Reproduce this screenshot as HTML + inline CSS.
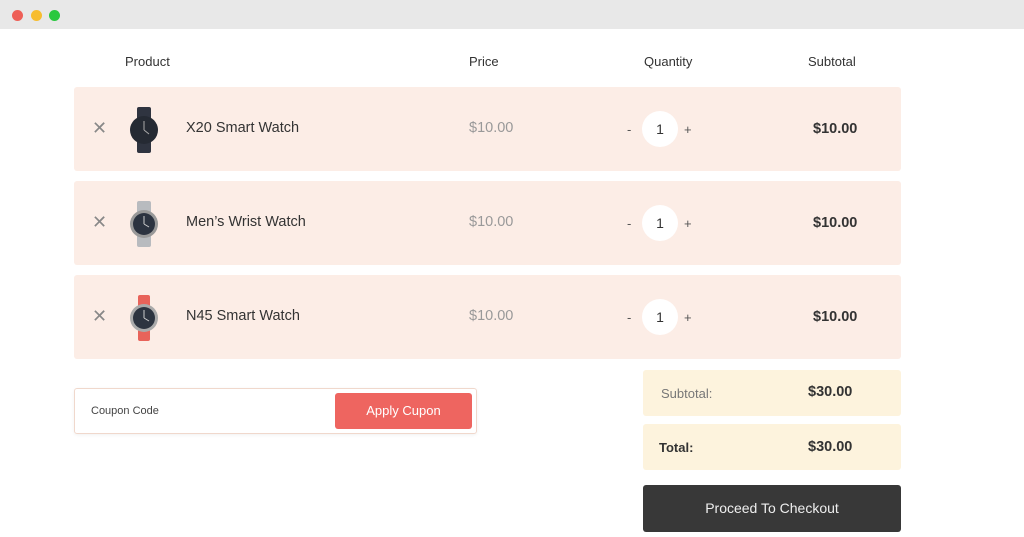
<!DOCTYPE html><html><head><style>
body{margin:0;width:1024px;height:537px;background:#fff;font-family:"Liberation Sans",sans-serif;position:relative;overflow:hidden;color:#333}
.a{position:absolute}
.bar{left:0;top:0;width:1024px;height:29px;background:#e8e8e8}
.dot{width:11px;height:11px;border-radius:50%;top:10px}
.h{top:54px;font-size:13px;color:#333}
.row{left:74px;width:827px;height:84px;background:#fcede6;border-radius:3px}
.x{left:18px;top:31px;font-size:18px;color:#888;font-weight:300}
.nm{left:112px;top:33px;font-size:14.5px;color:#333}
.pr{left:395px;top:33px;font-size:14.5px;color:#999}
.q{left:570px;top:24px;width:36px;height:36px;border-radius:50%;background:#fff;text-align:center;line-height:36px;font-size:14px}
.m{top:35px;font-size:13px;color:#555}
.st{left:739px;top:34px;font-size:14.5px;font-weight:600;color:#333}
.w{left:54px;top:20px}
.box{left:643px;width:258px;height:46px;background:#fdf3dd;border-radius:3px}
</style></head><body>
<div class="a bar"></div>
<div class="a dot" style="left:12px;background:#ee5f57"></div>
<div class="a dot" style="left:31px;background:#f7bd2f"></div>
<div class="a dot" style="left:49px;background:#2ac83f"></div>
<div class="a h" style="left:125px">Product</div>
<div class="a h" style="left:469px">Price</div>
<div class="a h" style="left:644px">Quantity</div>
<div class="a h" style="left:808px">Subtotal</div>

<div class="a row" style="top:87px">
<div class="a x">✕</div>
<svg class="a w" width="34" height="46" viewBox="0 0 34 46"><rect x="9" y="0" width="14" height="46" rx="2" fill="#2f3440"/><circle cx="16" cy="23" r="14" fill="#252a33"/><path d="M16 23V14M16 23l5 4" stroke="#aaa" stroke-width="1"/></svg>
<div class="a nm">X20 Smart Watch</div><div class="a pr">$10.00</div>
<div class="a m" style="left:553px">-</div><div class="a q" style="left:568px">1</div><div class="a m" style="left:610px">+</div>
<div class="a st">$10.00</div></div>

<div class="a row" style="top:181px">
<div class="a x">✕</div>
<svg class="a w" width="34" height="46" viewBox="0 0 34 46"><rect x="9" y="0" width="14" height="46" rx="2" fill="#b8bbbf"/><circle cx="16" cy="23" r="14" fill="#999"/><circle cx="16" cy="23" r="11" fill="#2c3340"/><path d="M16 23V15M16 23l5 3" stroke="#ccc" stroke-width="1"/></svg>
<div class="a nm">Men’s Wrist Watch</div><div class="a pr">$10.00</div>
<div class="a m" style="left:553px">-</div><div class="a q" style="left:568px">1</div><div class="a m" style="left:610px">+</div>
<div class="a st">$10.00</div></div>

<div class="a row" style="top:275px">
<div class="a x">✕</div>
<svg class="a w" width="34" height="46" viewBox="0 0 34 46"><rect x="10" y="0" width="12" height="46" rx="2" fill="#e8635a"/><circle cx="16" cy="23" r="14" fill="#aaa"/><circle cx="16" cy="23" r="11" fill="#2d3440"/><path d="M16 23V15M16 23l5 3" stroke="#ccc" stroke-width="1"/></svg>
<div class="a nm">N45 Smart Watch</div><div class="a pr">$10.00</div>
<div class="a m" style="left:553px">-</div><div class="a q" style="left:568px">1</div><div class="a m" style="left:610px">+</div>
<div class="a st">$10.00</div></div>

<div class="a" style="left:74px;top:388px;width:401px;height:44px;border:1px solid #f0d8cc;border-radius:3px;box-shadow:0 1px 3px rgba(0,0,0,.06)"></div>
<div class="a" style="left:91px;top:405px;font-size:11px;color:#444">Coupon Code</div>
<div class="a" style="left:335px;top:393px;width:137px;height:36px;background:#ee6560;border-radius:3px;color:#fff;font-size:13px;text-align:center;line-height:36px">Apply Cupon</div>

<div class="a box" style="top:370px"><div class="a" style="left:18px;top:16px;font-size:13px;color:#777">Subtotal:</div><div class="a" style="left:165px;top:14px;font-size:14.5px;font-weight:600">$30.00</div></div>
<div class="a box" style="top:424px"><div class="a" style="left:16px;top:16px;font-size:13px;color:#333;font-weight:bold">Total:</div><div class="a" style="left:165px;top:15px;font-size:14.5px;font-weight:600">$30.00</div></div>
<div class="a" style="left:643px;top:485px;width:258px;height:47px;background:#383838;border-radius:3px;color:#eee;font-size:14px;text-align:center;line-height:47px">Proceed To Checkout</div>
</body></html>
